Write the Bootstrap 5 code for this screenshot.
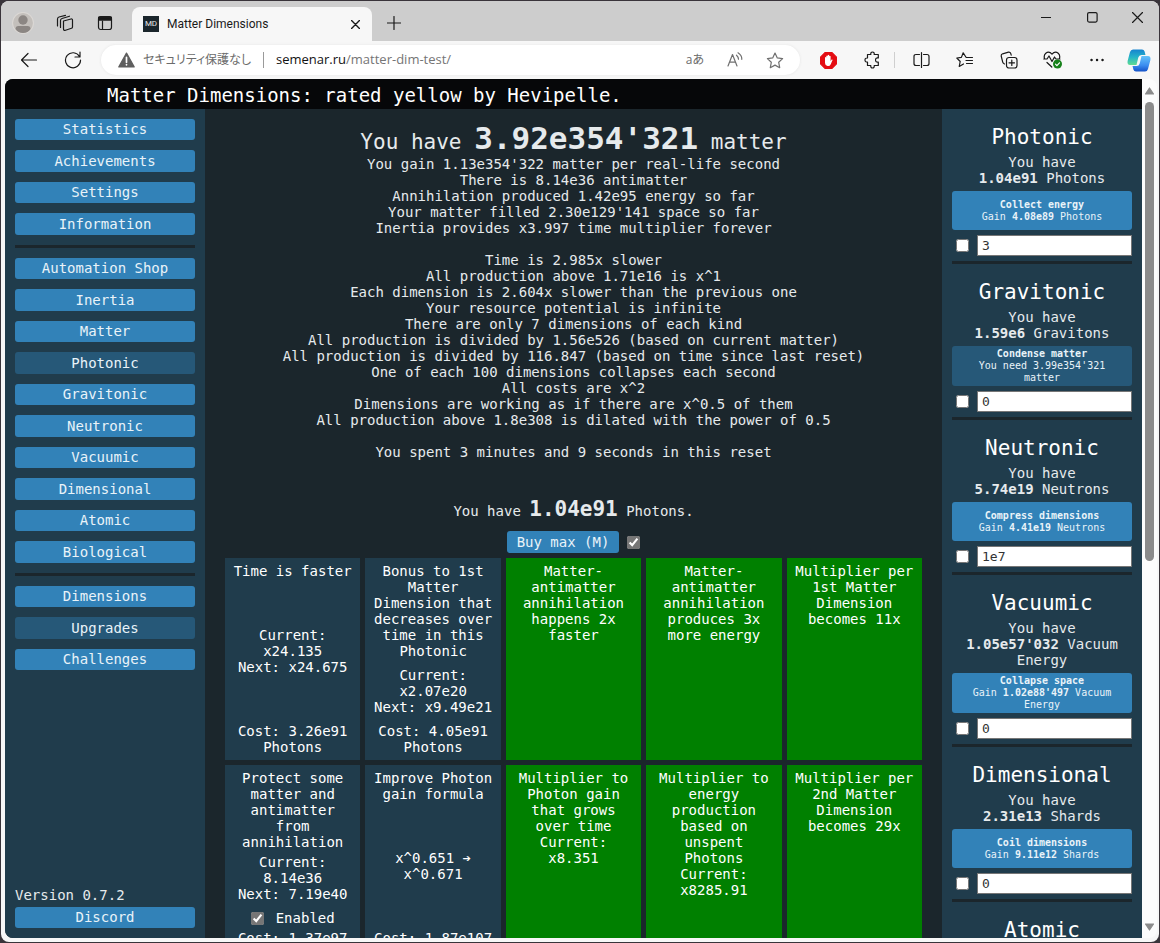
<!DOCTYPE html>
<html lang="en">
<head>
<meta charset="utf-8">
<meta name="viewport" content="width=device-width, initial-scale=1">
<title>Matter Dimensions</title>
<link href="https://cdn.jsdelivr.net/npm/bootstrap@5.3.0/dist/css/bootstrap.min.css" rel="stylesheet">
<style>
:root { --dark: #1b262c; --side: #203c4c; --blue: #3282b8; --dim: #265878; }
body { background: #39343a; height: 100vh; overflow: hidden; padding: 1px; }
.win { background: #f7f7f7; border-radius: 8px; height: 100%; overflow: hidden; color: #1a1a1a; font-family: "Open Sans", "Noto Sans CJK JP", sans-serif; }
.win svg { display: block; flex: none; fill: none; stroke: #1a1a1a; stroke-width: 1.2; stroke-linejoin: round; stroke-linecap: round; }
.win .pill svg.soft { stroke: #707070; }
.win .sbar svg { fill: #8b8b8b; stroke: #8b8b8b; }
.tabstrip { background: #cdcdcd; height: 40px; }
.cell { border: 0; background: none; padding: 0; width: 44px; height: 38px; display: flex; align-items: center; justify-content: center; flex: none; }
.cell-40 { width: 40px; }
.cell-46 { width: 46px; }
.tabstrip .cell { height: 44px; }
.tabstrip .caption { height: 32px; }
.tab-on { background: #f7f7f7; width: 240px; margin: 6px 0 0 7px; border-radius: 8px 8px 0 0; padding: 0 8px 0 11px; font-size: 12px; font-family: Roboto, sans-serif; }
.favicon { background: var(--dark); color: #e8e8e8; width: 16px; height: 16px; font-size: 8px; line-height: 16px; }
.toolbar { height: 38px; padding-left: 6px; }
.pill { background: #fff; border-radius: 15px; height: 30px; margin: 0 6px; padding: 0 5px 0 17px; box-shadow: 0 0 3px #e4e4e4; }
.insecure { font-size: 12px; font-feature-settings: "palt"; color: #6b6b6b; }
.vline { width: 1px; height: 16px; background: #9a9a9a; }
.vline.wide { margin: 0 8px 0 12px; }
.vline.pale { background: #cfcfcf; }
.url { font-size: 13px; color: #757575; }
.url b { color: #111; font-weight: 400; }
.view { margin: 0 2px 4px 4px; border-radius: 8px; overflow: hidden; background: #fcfcfc; }
.game { background: var(--dark); color: #e6eaec; font: 14px/16px "DejaVu Sans Mono", monospace; }
.ticker { background: #060709; height: 30px; line-height: 32px; font-size: 19px; padding-left: 102px; color: #fff; }
.side { background: var(--side); width: 200px; flex: none; padding: 10px; }
.side hr { margin: 10px 0; border: 0; height: 3px; background: var(--dark); opacity: 1; flex: none; }
.side .layer hr { margin: 0; }
.gbtn { --bs-btn-bg: var(--blue); --bs-btn-color: #e9f3f9; --bs-btn-hover-bg: #3f92ca; --bs-btn-hover-color: #fff; --bs-btn-border-width: 0; --bs-btn-border-radius: 3px; --bs-btn-padding-y: 0; --bs-btn-padding-x: 10px; --bs-btn-font-size: 14px; --bs-btn-line-height: 21px; --bs-btn-font-family: inherit; min-height: 21px; }
.menu .gbtn:nth-child(even), .gbtn.buy { --bs-btn-line-height: 22px; }
.gbtn.dimmed { --bs-btn-bg: var(--dim); }
.menu { display: flex; flex-direction: column; gap: 10px; }
.layer { text-align: center; }
.layer h2 { font-size: 21px; line-height: 28px; margin: 0; padding: 14px 0 3px; font-weight: 400; color: #fff; }
.layer p { margin: 0 0 5px; }
.layer .gbtn { --bs-btn-font-size: 10px; --bs-btn-line-height: 12px; --bs-btn-padding-y: 2px; --bs-btn-padding-x: 12px; min-height: 39px; width: 100%; }
.auto-row { margin: 5px 0; }
.amount { border: 1px solid #767676; height: 21px; padding: 0 4px; font-size: 13px; color: #333; background: #fff; min-width: 0; }
.tick { width: 13px; height: 13px; margin: 0; accent-color: #767676; flex: none; }
.stage { padding: 14px 20px 0; min-width: 0; }
.headline { font-size: 21px; line-height: 37px; height: 33px; }
.headline b { font-size: 31px; line-height: 1; }
.balance { line-height: 31px; margin: 36px 0 4px; height: 31px; }
.balance b { font-size: 21px; line-height: 1; }
.upgrades { display: grid; grid-template-columns: repeat(5, minmax(0, 1fr)); grid-auto-rows: 202px; gap: 5px; margin-top: 5px; }
.upg { background: var(--side); padding: 5px 8px; display: flex; flex-direction: column; justify-content: space-between; color: #fff; }
.upg.owned { background: #008000; justify-content: flex-start; }
.sbar { width: 15px; padding: 8px 0 7px; }
.sbar .thumb { width: 9px; background: #8b8b8b; border-radius: 5px; flex: 458 0 0; margin-top: 7px; }
.sbar .rest { flex: 362 0 0; }
</style>
</head>
<body>
<div class="win d-flex flex-column">
  <header class="tabstrip d-flex flex-shrink-0">
    <button class="cell" aria-label="Profile"><svg width="22" height="22" viewBox="0 0 22 22"><circle cx="11" cy="11" r="10.5" fill="#c3bfbb" stroke="#dad7d4"/><circle cx="11" cy="8" r="4.7" fill="#8b8683" stroke="none"/><path d="M3.500 17q0-3 3-3h9q3 0 3 3-2.500 4-7.500 4t-7.500-4z" fill="#8b8683" stroke="none"/></svg></button>
    <button class="cell cell-40" aria-label="Workspaces"><svg width="18" height="18" viewBox="0 0 18 18"><path d="M7.500 6.500l7.500-2q1.500-.3 1.500 1.200v6.800q0 1-1 1.300l-6 2q-2 .6-2-1.300zM4.500 13V6q0-1.500 1.500-2l7.500-2.300M1.500 11.500V4.500Q1.500 3 3 2.500L9.500.9" transform="translate(0 .5)"/></svg></button>
    <button class="cell cell-40" aria-label="Tab actions"><svg width="16" height="16" viewBox="0 0 16 16"><rect x="1.500" y="1.500" width="13" height="13" rx="2.200"/><path d="M2 2.500h12v2.300H2z" fill="#111" stroke-width="2"/><path d="M5.500 6v8"/></svg></button>
    <div class="tab-on d-flex align-items-center">
      <span class="favicon text-center me-2">MD</span>
      <span class="flex-grow-1">Matter Dimensions</span>
      <button class="border-0 bg-transparent p-1" aria-label="Close tab"><svg width="9" height="9" viewBox="0 0 8 8"><path d="M.5.5l7 7M7.500.5l-7 7"/></svg></button>
    </div>
    <button class="cell" aria-label="New tab"><svg width="14" height="14" viewBox="0 0 14 14"><path d="M7 .5v13M.5 7h13"/></svg></button>
    <span class="flex-grow-1"></span>
    <button class="cell cell-46 caption" aria-label="Minimize"><svg width="10" height="10" viewBox="0 0 10 10"><path d="M0 5.500h10"/></svg></button>
    <button class="cell cell-46 caption" aria-label="Maximize"><svg width="11" height="11" viewBox="0 0 11 11"><rect x=".6" y=".6" width="9.500" height="9.500" rx="1.500"/></svg></button>
    <button class="cell caption" aria-label="Close"><svg width="11" height="11" viewBox="0 0 11 11"><path d="M.5.5l10 10M10.500.5l-10 10"/></svg></button>
  </header>

  <nav class="toolbar d-flex align-items-center flex-shrink-0" aria-label="Browser toolbar">
    <button class="cell" aria-label="Back"><svg width="18" height="16" viewBox="0 0 18 16"><path d="M16.500 8H1.500M8 1.500L1.500 8 8 14.500"/></svg></button>
    <button class="cell" aria-label="Refresh"><svg width="18" height="18" viewBox="0 0 18 18"><path d="M15.500 5.500A7.500 7.500 0 1 0 16.500 9M16 1v5h-5"/></svg></button>
    <div class="pill d-flex align-items-center flex-grow-1">
      <svg width="17" height="16" viewBox="0 0 16 15"><path d="M8 1L15.200 14H.8z" fill="#5f5f5f" stroke="#5f5f5f"/><path d="M8 5v4.500M8 11.800v.2" stroke="#fff" stroke-width="1.600"/></svg>
      <span class="insecure text-nowrap ms-2" lang="ja">セキュリティ保護なし</span>
      <span class="vline wide"></span>
      <a class="url text-decoration-none ms-1 flex-grow-1" href="#"><b>semenar.ru</b>/matter-dim-test/</a>
      <button class="cell cell-40 insecure" aria-label="Translate"><span>aあ</span></button>
      <button class="cell cell-40" aria-label="Read aloud"><svg class="soft" width="16" height="16" viewBox="0 0 16 16"><path d="M1 14L5.500 2.500 10 14M2.600 10.200h5.800M9.500 3.200q2 1.800 2 4M11 .8q4 2.700 3.800 6.500"/></svg></button>
      <button class="cell cell-40" aria-label="Add to favorites"><svg class="soft" width="18" height="17" viewBox="0 0 18 17"><path d="M9 1l2.300 4.900 5.300.7-3.900 3.700 1 5.400L9 13.100l-4.700 2.600 1-5.400L1.400 6.600l5.300-.7z"/></svg></button>
    </div>
    <button class="cell" aria-label="Ad blocker"><svg width="17" height="17" viewBox="0 0 17 17"><path d="M5.200.5h6.600l4.700 4.700v6.600l-4.700 4.700H5.200L.5 11.800V5.200z" fill="#e40d13" stroke="#e40d13"/><path d="M5 8.500v-3q.8-.8 1.300 0V4q.8-1 1.500 0v-.8q.7-.8 1.400 0v1q.8-.8 1.400 0v5l1-1.700q1-.3 1 .6l-2 4.400q-.7 1.500-2.300 1.500H7.500Q5 13.500 5 11z" fill="#fff" stroke="none"/></svg></button>
    <button class="cell" aria-label="Extensions"><svg width="17" height="18" viewBox="0 0 17 18"><path d="M3.500 3.500H6.800Q6.500 1 8.500 1t1.700 2.500H14.300V7Q11.500 6.600 11.500 9t2.800 2V14.500H10.200Q10.500 17 8.500 17t-1.700-2.500H3.500V11Q1 11.200 1 9t2.500-2z"/></svg></button>
    <span class="vline pale me-1"></span>
    <button class="cell" aria-label="Split screen"><svg width="17" height="16" viewBox="0 0 17 16"><path d="M6.500 2.500H3q-2 0-2 2v7q0 2 2 2h3.500M10.500 2.500H14q2 0 2 2v7q0 2-2 2h-3.500M8.500.6v14.800"/></svg></button>
    <button class="cell" aria-label="Favorites"><svg width="18" height="16" viewBox="0 0 18 16"><path d="M10 5.200L7.200.8 5.400 5.400.8 6l3.400 3.500-1 5L7.500 12M10.500 5.500H16.500M10 8.500h6.500M10.500 11.500h6"/></svg></button>
    <button class="cell" aria-label="Collections"><svg width="18" height="18" viewBox="0 0 18 18"><rect x="6.500" y="6.500" width="10.500" height="10.500" rx="2.500"/><path d="M11.800 9v5.500M9 11.800h5.500M4.500 13Q3 12.500 2.700 11.200L1.200 5Q1 3.300 2.600 2.800L8.500 1.200q1.800-.2 2.300 1.400l.4 1.600"/></svg></button>
    <button class="cell" aria-label="Browser essentials"><svg width="20" height="18" viewBox="0 0 20 18"><path d="M1.700 8Q.3 4.500 2.800 2.300 6-.2 9 3.200q3-3.400 6.200-.9Q17.600 4.500 16.300 8M.8 8H4l2-3 3 5.500L11.500 6l1.500 2h4M4 11.500l4.800 4.500"/><circle cx="14.500" cy="13" r="4.500" fill="#16811a" stroke="none"/><path d="M12.500 13.200l1.400 1.400 2.600-2.800" stroke="#fff"/></svg></button>
    <button class="cell" aria-label="More"><svg width="14" height="4" viewBox="0 0 14 4"><path d="M1.500 2h.1M7 2h.1M12.500 2h.1" stroke-width="2.400"/></svg></button>
    <button class="cell cell-40" aria-label="Copilot"><svg width="24" height="23" viewBox="0 0 24 23"><defs><linearGradient id="cpA" x1="0" y1="0" x2="0" y2="1"><stop offset="0" stop-color="#1683cf"/><stop offset=".5" stop-color="#25b4c8"/><stop offset="1" stop-color="#5fdc91"/></linearGradient><linearGradient id="cpB" x1="0" y1="0" x2="0" y2="1"><stop offset="0" stop-color="#64c3fa"/><stop offset=".6" stop-color="#3b8df0"/><stop offset="1" stop-color="#1452c8"/></linearGradient></defs><path d="M6 .5h9q2 0 2.600 2L18.500 6h-4q-2.500 0-3.200 2.500L9.500 16H3Q0 16 .6 12L3 3Q3.800.5 6 .5z" fill="url(#cpA)" stroke="none"/><path d="M18 22.500H9q-2 0-2.600-2L5.500 17h4q2.500 0 3.200-2.500L14.500 7H21q3 0 2.400 4L21 20q-.8 2.500-3 2.500z" fill="url(#cpB)" stroke="none"/></svg></button>
  </nav>

  <div class="view d-flex flex-grow-1">
    <div class="game d-flex flex-column flex-grow-1 overflow-hidden">
      <div class="ticker text-nowrap flex-shrink-0">Matter Dimensions: rated yellow by Hevipelle.</div>
      <div class="d-flex flex-grow-1 overflow-hidden">
        <nav class="side d-flex flex-column" aria-label="Game menu">
          <div class="menu">
            <button class="btn gbtn">Statistics</button><button class="btn gbtn">Achievements</button><button class="btn gbtn">Settings</button><button class="btn gbtn">Information</button>
          </div>
          <hr>
          <div class="menu">
            <button class="btn gbtn">Automation Shop</button><button class="btn gbtn">Inertia</button><button class="btn gbtn">Matter</button><button class="btn gbtn dimmed">Photonic</button><button class="btn gbtn">Gravitonic</button><button class="btn gbtn">Neutronic</button><button class="btn gbtn">Vacuumic</button><button class="btn gbtn">Dimensional</button><button class="btn gbtn">Atomic</button><button class="btn gbtn">Biological</button>
          </div>
          <hr>
          <div class="menu">
            <button class="btn gbtn">Dimensions</button><button class="btn gbtn dimmed">Upgrades</button><button class="btn gbtn">Challenges</button>
          </div>
          <div class="mt-auto d-flex flex-column gap-1"><span>Version 0.7.2</span><button class="btn gbtn">Discord</button></div>
        </nav>

        <main class="stage flex-grow-1 text-center">
          <div class="headline text-nowrap">You have <b>3.92e354'321</b> matter</div>
          <div>You gain 1.13e354'322 matter per real-life second<br>There is 8.14e36 antimatter<br>Annihilation produced 1.42e95 energy so far<br>Your matter filled 2.30e129'141 space so far<br>Inertia provides x3.997 time multiplier forever</div>
          <div class="my-3">Time is 2.985x slower<br>All production above 1.71e16 is x^1<br>Each dimension is 2.604x slower than the previous one<br>Your resource potential is infinite<br>There are only 7 dimensions of each kind<br>All production is divided by 1.56e526 (based on current matter)<br>All production is divided by 116.847 (based on time since last reset)<br>One of each 100 dimensions collapses each second<br>All costs are x^2<br>Dimensions are working as if there are x^0.5 of them<br>All production above 1.8e308 is dilated with the power of 0.5</div>
          <div>You spent 3 minutes and 9 seconds in this reset</div>
          <p class="balance">You have <b>1.04e91</b> Photons.</p>
          <div class="d-flex justify-content-center align-items-center">
            <button class="btn gbtn buy">Buy max (M)</button>
            <input class="tick ms-2" type="checkbox" checked aria-label="Buy max automatically">
          </div>
          <div class="upgrades">
            <div class="upg"><div>Time is faster</div><div>Current: x24.135<br>Next: x24.675</div><div>Cost: 3.26e91 Photons</div></div>
            <div class="upg"><div>Bonus to 1st Matter Dimension that decreases over time in this Photonic</div><div>Current: x2.07e20<br>Next: x9.49e21</div><div>Cost: 4.05e91 Photons</div></div>
            <div class="upg owned"><div>Matter-antimatter annihilation happens 2x faster</div></div>
            <div class="upg owned"><div>Matter-antimatter annihilation produces 3x more energy</div></div>
            <div class="upg owned"><div>Multiplier per 1st Matter Dimension becomes 11x</div></div>
            <div class="upg"><div>Protect some matter and antimatter from annihilation</div><div>Current: 8.14e36<br>Next: 7.19e40</div><div class="d-flex justify-content-center align-items-center pt-1"><input class="tick me-2" type="checkbox" id="protect" checked><label class="ms-1" for="protect">Enabled</label></div><div>Cost: 1.37e97 Photons</div></div>
            <div class="upg"><div>Improve Photon gain formula</div><div>x^0.651 ➔ x^0.671</div><div>Cost: 1.87e107 Photons</div></div>
            <div class="upg owned"><div>Multiplier to Photon gain that grows over time</div><div>Current: x8.351</div></div>
            <div class="upg owned"><div>Multiplier to energy production based on unspent Photons</div><div>Current: x8285.91</div></div>
            <div class="upg owned"><div>Multiplier per 2nd Matter Dimension becomes 29x</div></div>
          </div>
        </main>

        <aside class="side py-0">
          <section class="layer"><h2>Photonic</h2><p>You have<br><b>1.04e91</b> Photons</p><button class="btn gbtn"><b>Collect energy</b><br>Gain <b>4.08e89</b> Photons</button>
            <div class="auto-row d-flex align-items-center"><input class="tick ms-1 me-2" type="checkbox" aria-label="Automate Photonic"><input class="amount flex-grow-1" type="text" value="3" aria-label="Photonic threshold"></div><hr></section>
          <section class="layer"><h2>Gravitonic</h2><p>You have<br><b>1.59e6</b> Gravitons</p><button class="btn gbtn dimmed"><b>Condense matter</b><br>You need 3.99e354'321 matter</button>
            <div class="auto-row d-flex align-items-center"><input class="tick ms-1 me-2" type="checkbox" aria-label="Automate Gravitonic"><input class="amount flex-grow-1" type="text" value="0" aria-label="Gravitonic threshold"></div><hr></section>
          <section class="layer"><h2>Neutronic</h2><p>You have<br><b>5.74e19</b> Neutrons</p><button class="btn gbtn"><b>Compress dimensions</b><br>Gain <b>4.41e19</b> Neutrons</button>
            <div class="auto-row d-flex align-items-center"><input class="tick ms-1 me-2" type="checkbox" aria-label="Automate Neutronic"><input class="amount flex-grow-1" type="text" value="1e7" aria-label="Neutronic threshold"></div><hr></section>
          <section class="layer"><h2>Vacuumic</h2><p>You have<br><b>1.05e57'032</b> Vacuum Energy</p><button class="btn gbtn"><b>Collapse space</b><br>Gain <b>1.02e88'497</b> Vacuum Energy</button>
            <div class="auto-row d-flex align-items-center"><input class="tick ms-1 me-2" type="checkbox" aria-label="Automate Vacuumic"><input class="amount flex-grow-1" type="text" value="0" aria-label="Vacuumic threshold"></div><hr></section>
          <section class="layer"><h2>Dimensional</h2><p>You have<br><b>2.31e13</b> Shards</p><button class="btn gbtn"><b>Coil dimensions</b><br>Gain <b>9.11e12</b> Shards</button>
            <div class="auto-row d-flex align-items-center"><input class="tick ms-1 me-2" type="checkbox" aria-label="Automate Dimensional"><input class="amount flex-grow-1" type="text" value="0" aria-label="Dimensional threshold"></div><hr></section>
          <section class="layer"><h2>Atomic</h2></section>
        </aside>
      </div>
    </div>
    <div class="sbar d-flex flex-column align-items-center flex-shrink-0">
      <svg width="9" height="8" viewBox="0 0 9 8"><path d="M4.500 1L8.500 7H.5z"/></svg>
      <div class="thumb"></div><div class="rest"></div>
      <svg width="9" height="8" viewBox="0 0 9 8"><path d="M4.500 7L8.500 1H.5z"/></svg>
    </div>
  </div>
</div>
<script src="https://cdn.jsdelivr.net/npm/bootstrap@5.3.0/dist/js/bootstrap.bundle.min.js"></script>
</body>
</html>
